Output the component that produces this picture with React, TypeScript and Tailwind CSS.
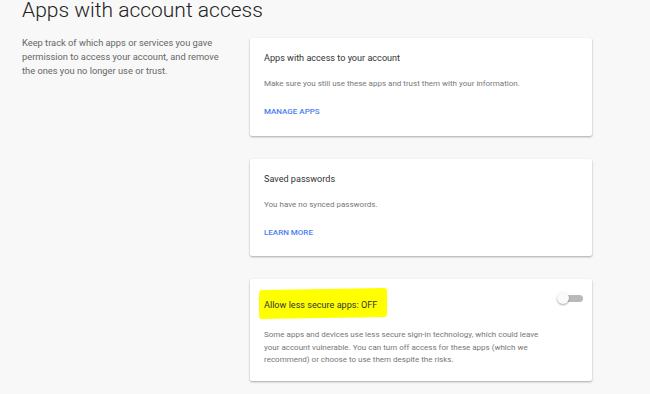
import React from 'react';

function Card({ children, className = '' }: { children: React.ReactNode; className?: string }) {
  return (
    <div
      className={`bg-white rounded-[2px] shadow-[0_1px_2px_rgba(0,0,0,0.25),0_1px_3px_rgba(0,0,0,0.08)] px-[14px] ${className}`}
    >
      {children}
    </div>
  );
}

function Toggle() {
  return (
    <div className="relative w-[26px] h-[12px] mt-[1px] -mr-[5px]">
      <div className="absolute left-[3px] right-0 top-[3px] h-[7px] rounded-full bg-[#b9b9b9]" />
      <div className="absolute left-0 top-0 w-[12px] h-[12px] rounded-full bg-[#fafafa] shadow-[0_1px_2px_rgba(0,0,0,0.35)]" />
    </div>
  );
}

export default function App() {
  return (
    <div className="w-[650px] h-[394px] overflow-hidden bg-[#f8f8f8] font-['Roboto',sans-serif]">
      <h1 className="pl-[22px] text-[21px] leading-[20px] text-[#222] font-light">
        Apps with account access
      </h1>

      <div className="flex pl-[22px] mt-[18px]">
        <p className="w-[228px] pr-[20px] text-[9.3px] leading-[14px] text-[#666] -mt-[2px]">
          Keep track of which apps or services you gave permission to access your account, and remove
          the ones you no longer use or trust.
        </p>

        <div className="w-[342px] flex flex-col gap-[23px]">
          <Card className="h-[98px] pt-[13px]">
            <div className="text-[9.1px] leading-[14px] text-[#333]">Apps with access to your account</div>
            <div className="mt-[13px] text-[8px] leading-[12px] text-[#777]">
              Make sure you still use these apps and trust them with your information.
            </div>
            <div className="mt-[16px] text-[8px] leading-[12px] font-medium text-[#4a7ef0]">MANAGE APPS</div>
          </Card>

          <Card className="h-[97px] pt-[13px]">
            <div className="text-[9.1px] leading-[14px] text-[#333]">Saved passwords</div>
            <div className="mt-[13px] text-[8px] leading-[12px] text-[#777]">You have no synced passwords.</div>
            <div className="mt-[16px] text-[8px] leading-[12px] font-medium text-[#4a7ef0]">LEARN MORE</div>
          </Card>

          <Card className="h-[102px] pt-[12px]">
            <div className="flex items-start justify-between">
              <span className="relative inline-block">
                <span className="absolute -left-[5px] -right-[10px] top-[-2px] bottom-[-3px] bg-[#ffff00] rounded-[3px] -skew-y-1" />
                <span className="relative text-[9.1px] leading-[14px] text-[#333]">Allow less secure apps: OFF</span>
              </span>
              <Toggle />
            </div>
            <div className="mt-[14px] max-w-[285px] text-[8px] leading-[12.5px] text-[#777]">
              Some apps and devices use less secure sign-in technology, which could leave your account
              vulnerable. You can turn off access for these apps (which we recommend) or choose to use
              them despite the risks.
            </div>
          </Card>
        </div>
      </div>
    </div>
  );
}
